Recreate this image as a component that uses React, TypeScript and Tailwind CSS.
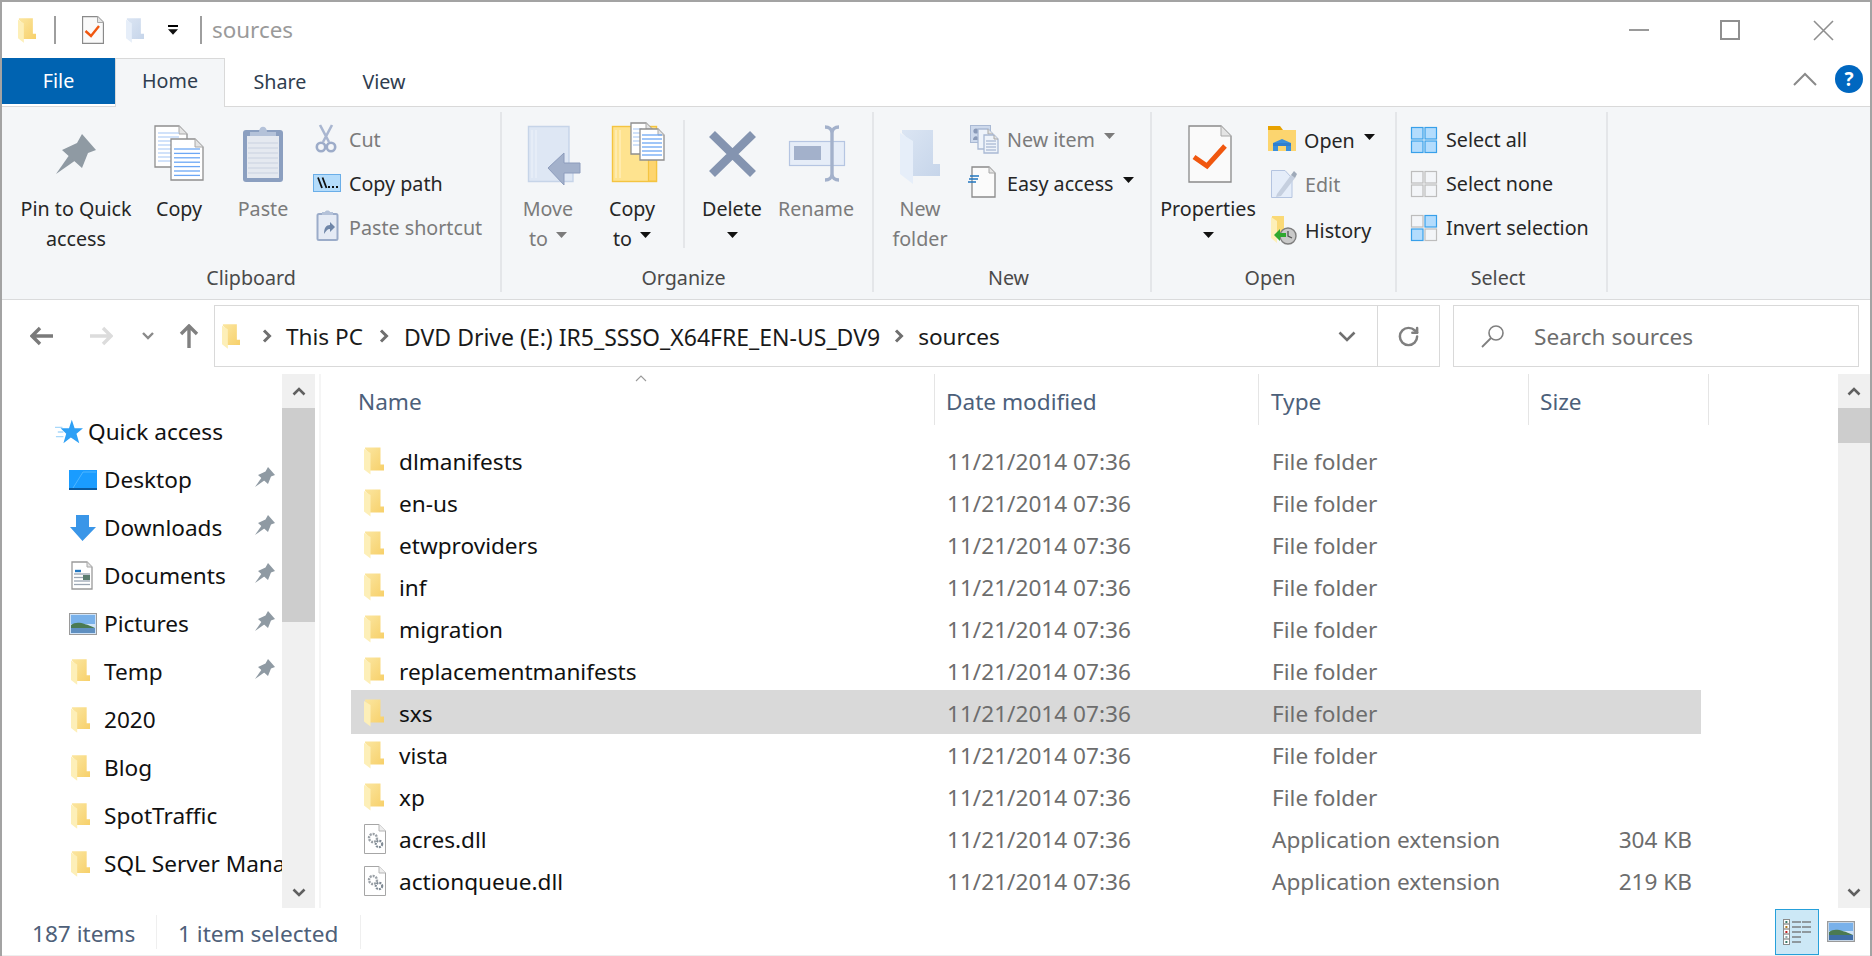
import React from "react";
import { RotateCw } from "lucide-react";

const BLUE_LINE = "#6ca7f5";

function Grad({ id, a, b }: { id: string; a: string; b: string }) {
  return (
    <defs>
      <linearGradient id={id} x1="0" y1="0" x2="1" y2="1">
        <stop offset="0" stopColor={a} />
        <stop offset="1" stopColor={b} />
      </linearGradient>
    </defs>
  );
}

function Folder({ pale = false, w = 20, h = 28, className = "" }: { pale?: boolean; w?: number; h?: number; className?: string }) {
  const id = pale ? "fp" : "fy";
  return (
    <svg width={w} height={h} viewBox="0 0 20 28" className={"shrink-0 overflow-visible " + className}>
      <Grad id={id} a={pale ? "#dbe5f3" : "#fbe6a0"} b={pale ? "#c6d5ea" : "#f7d06a"} />
      <path d="M1 0.5H16.5V17.5H20V23.5H5V6L1 2Z" fill={`url(#${id})`} />
      <path d="M0 2L6.5 6V27.5L0 22.5Z" fill={pale ? "#e6eef9" : "#fdefb8"} />
    </svg>
  );
}

function Lines({ x1, x2, y, n, step, color }: { x1: number; x2: number; y: number; n: number; step: number; color: string }) {
  return (
    <>
      {Array.from({ length: n }).map((_, i) => (
        <line key={i} x1={x1} x2={x2} y1={y + i * step} y2={y + i * step} stroke={color} strokeWidth="1.3" />
      ))}
    </>
  );
}

function Page({ x, y, w, h, f = 8, fill = "#fff", stroke = "#8f8f8f" }: { x: number; y: number; w: number; h: number; f?: number; fill?: string; stroke?: string }) {
  return (
    <>
      <path d={`M${x} ${y}H${x + w - f}L${x + w} ${y + f}V${y + h}H${x}Z`} fill={fill} stroke={stroke} strokeWidth="1.3" />
      <path d={`M${x + w - f} ${y}V${y + f}H${x + w}`} fill="#e4e4e4" stroke="#a8a8a8" strokeWidth="1" />
    </>
  );
}

const BigBox = ({ children }: { children: React.ReactNode }) => (
  <svg width="60" height="66" viewBox="0 0 60 66" className="overflow-visible">
    {children}
  </svg>
);

const PinShape = ({ fill = "#8f9aa3" }: { fill?: string }) => (
  <>
    <path d="M10 54L24 34L30 40Z" fill={fill} />
    <path d="M36 14L50 30L42 33L36 48L16 30L31 23Z" fill={fill} />
  </>
);

const PinIcon = () => (
  <BigBox>
    <PinShape />
  </BigBox>
);

const CopyIcon = () => (
  <BigBox>
    <Page x={6} y={6} w={32} h={41} fill="#fff" />
    <Lines x1={9} x2={30} y={13} n={8} step={4} color="#b9d2f7" />
    <Page x={22} y={19} w={32} h={41} />
    <Lines x1={25} x2={51} y={29} n={7} step={4.4} color={BLUE_LINE} />
  </BigBox>
);

const PasteIcon = () => (
  <BigBox>
    <rect x="10" y="10" width="40" height="52" rx="3" fill="#8b9fc0" />
    <rect x="14" y="16" width="32" height="42" fill="#e5e9f0" />
    <Lines x1={15} x2={45} y={23} n={7} step={5} color="#d0d7e4" />
    <path d="M17 16V12H26C26 5 34 5 34 12H43V16Z" fill="#b4c2d9" />
  </BigBox>
);

const MoveIcon = () => (
  <BigBox>
    <path d="M10.5 6.5H51V51H55V61.5H10.5Z" fill="#dee7f4" stroke="#c6d4e8" strokeWidth="1.4" />
    <line x1="14" x2="14" y1="10" y2="58" stroke="#e9eff8" strokeWidth="1.5" />
    <line x1="18" x2="18" y1="10" y2="58" stroke="#e9eff8" strokeWidth="1.5" />
    <path d="M30 48L46 33V43H62V53H46V65Z" fill="#a3b1cb" stroke="#8d9cbc" strokeWidth="1" />
  </BigBox>
);

const CopyToIcon = () => (
  <BigBox>
    <rect x="10.5" y="6.5" width="44" height="55" fill="#fee38f" stroke="#f4c441" strokeWidth="1.4" />
    <line x1="14" x2="14" y1="10" y2="58" stroke="#ffeeb8" strokeWidth="1.5" />
    <line x1="18" x2="18" y1="10" y2="58" stroke="#ffeeb8" strokeWidth="1.5" />
    <path d="M46.5 61V40L50 36L54.5 40V61Z" fill="#fed56f" stroke="#f4c441" strokeWidth="1.2" />
    <Page x={29} y={3} w={21} h={31} f={6} />
    <Lines x1={31} x2={40} y={9} n={5} step={4} color="#b9d2f7" />
    <Page x={38} y={9} w={24} h={31} f={6} />
    <Lines x1={40} x2={60} y={15} n={6} step={4} color={BLUE_LINE} />
  </BigBox>
);

const DeleteIcon = () => (
  <BigBox>
    <path d="M10 14L51 54M51 14L10 54" stroke="#8494b0" strokeWidth="8.5" />
  </BigBox>
);

const RenameIcon = () => (
  <BigBox>
    <rect x="3.5" y="21.5" width="55" height="24" fill="#e6edf8" stroke="#b5c5e2" strokeWidth="1.2" />
    <rect x="8" y="26" width="27" height="14" fill="#a3b1cb" />
    <path d="M46 12V55M39 7C43 7 46 9 46 13C46 9 49 7 53 7M39 60C43 60 46 58 46 54C46 58 49 60 53 60" fill="none" stroke="#a3b1cb" strokeWidth="3.4" />
  </BigBox>
);

const NewFolderIcon = () => (
  <div className="h-[66px] pt-[9px]">
    <Folder pale w={40} h={56} />
  </div>
);

const PropertiesIcon = () => (
  <BigBox>
    <Page x={11} y={6} w={42} h={56} f={10} fill="#fafafa" stroke="#8a8a8a" />
    <path d="M16 37L29 46L47 26" fill="none" stroke="#f0570f" strokeWidth="5" />
  </BigBox>
);

const Small = ({ children, w = 28 }: { children: React.ReactNode; w?: number }) => (
  <svg width={w} height="30" viewBox={`0 0 ${w} 30`} className="shrink-0 overflow-visible">
    {children}
  </svg>
);

const CutIcon = () => (
  <Small>
    <path d="M7 0L16 17M19 0L10 17" stroke="#a9b6d0" strokeWidth="2.6" />
    <circle cx="8" cy="22" r="4.2" fill="none" stroke="#9dacc9" strokeWidth="2.6" />
    <circle cx="18" cy="22" r="4.2" fill="none" stroke="#9dacc9" strokeWidth="2.6" />
  </Small>
);

const CopyPathIcon = () => (
  <Small>
    <rect x="0.5" y="5.5" width="27" height="17" fill="#b4dcfb" stroke="#6aaee8" />
    <path d="M5 8.5L9 19M9.5 8.5L13.5 19" stroke="#111" strokeWidth="1.8" />
    <path d="M15 18H17M19 18H21M23 18H25" stroke="#111" strokeWidth="1.8" />
  </Small>
);

const PasteShortcutIcon = () => (
  <Small>
    <rect x="4.5" y="1" width="20" height="26" rx="1.5" fill="#e5ebf5" stroke="#9bacc9" strokeWidth="2" />
    <path d="M9 2V-1H12C12 -3 17 -3 17 -1H20V2Z" fill="#b4c2d9" />
    <path d="M11 21C11 15 13 12 17 12V9L22 14L17 19V16C14 16 13 18 11 21Z" fill="#6f86a8" />
  </Small>
);

const NewItemIcon = () => (
  <Small>
    <rect x="0.5" y="0.5" width="20" height="17" fill="#cdd9ec" stroke="#a9b9d4" />
    <circle cx="6" cy="6" r="2.6" fill="#8a9ab8" />
    <path d="M3 15C3 10 9 10 9 15Z" fill="#8a9ab8" />
    <Page x={8} y={4} w={15} h={20} f={5} fill="#eef3fa" stroke="#a9b9d4" />
    <Page x={14} y={10} w={14} h={18} f={4} fill="#eef3fa" stroke="#a9b9d4" />
    <Lines x1={16} x2={26} y={16} n={4} step={3} color="#a9b9d4" />
  </Small>
);

const EasyIcon = () => (
  <Small>
    <Page x={2} y={-2} w={23} h={30} f={6} fill="#fbfbfb" stroke="#8a8a8a" />
    <path d="M0 7H9M-1 10H8M-2 13H6" stroke="#2277c0" strokeWidth="1.6" />
  </Small>
);

const OpenIcon = () => (
  <Small>
    <path d="M0 0H12L15 4H0Z" fill="#e8a200" />
    <rect x="0" y="4" width="28" height="21" fill="#fcd56f" />
    <path d="M5 25V17L14 13L23 17V25H18V19H10V25Z" fill="#3a8fdc" />
    <rect x="5" y="17" width="18" height="3" fill="#2f7fcf" />
  </Small>
);

const EditIcon = () => (
  <Small>
    <path d="M3.5 0.5H17L24 8V27.5H3.5Z" fill="#e5edf9" stroke="#b4c4e0" />
    <path d="M9 24L23 5L27 8L13 26L8 27Z" fill="#c5cfdf" />
    <path d="M23 5L26 1L29 4L27 8Z" fill="#9faab9" />
  </Small>
);

const HistoryIcon = () => (
  <Small>
    <path d="M4 0H16V20H4Z" fill="#fad976" />
    <path d="M3 1L9 5V27L3 22Z" fill="#fdefb8" />
    <circle cx="20" cy="20" r="8" fill="#c9c9c9" stroke="#7d7d7d" strokeWidth="1.4" />
    <path d="M20 15V20L24 22" stroke="#555" strokeWidth="1.3" fill="none" />
    <path d="M6 19L12 13V17H18V21H12V25Z" fill="#2fa82f" />
  </Small>
);

const Squares = ({ pattern }: { pattern: boolean[] }) => (
  <svg width="26" height="26" viewBox="0 0 26 26" className="shrink-0 overflow-visible">
    {[0, 1, 2, 3].map((i) => {
      const x = i % 2 === 0 ? 0.5 : 14;
      const y = i < 2 ? 0.5 : 14;
      const on = pattern[i];
      return <rect key={i} x={x} y={y} width="11.5" height="11.5" fill={on ? "#b3dcfd" : "#f3f5f8"} stroke={on ? "#38a0ea" : "#bdbdbd"} strokeWidth="1.2" />;
    })}
  </svg>
);

const Caret = ({ color = "#111", className = "" }: { color?: string; className?: string }) => (
  <svg width="11" height="6" viewBox="0 0 11 6" className={"shrink-0 " + className}>
    <path d="M0 0H11L5.5 6Z" fill={color} />
  </svg>
);

function BigBtn({ w, ml, icon, l1, l2, caret, off }: { w: number; ml: string; icon: React.ReactNode; l1: string; l2?: string; caret?: boolean; off?: boolean }) {
  const txt = off ? "text-[#7b7b7b]" : "text-[#262626]";
  return (
    <div className={"flex flex-col items-center shrink-0 " + ml + " " + txt} style={{ width: w }}>
      <div className="h-[74px] flex justify-center">{icon}</div>
      <div className="h-[30px] leading-[30px] whitespace-nowrap">{l1}</div>
      <div className="h-[30px] leading-[30px] whitespace-nowrap flex items-center gap-[8px]">
        {l2 && <span>{l2}</span>}
        {caret && <Caret color={off ? "#7b7b7b" : "#111"} className="-mt-[8px]" />}
      </div>
    </div>
  );
}

function SmallBtn({ icon, text, off, caret, h = "h-[44px]", tw = "w-[36px]", caretOff }: { icon: React.ReactNode; text: string; off?: boolean; caret?: boolean; h?: string; tw?: string; caretOff?: boolean }) {
  return (
    <div className={"flex items-center " + h + " " + (off ? "text-[#7b7b7b]" : "text-[#262626]")}>
      <div className={"flex shrink-0 " + tw}>{icon}</div>
      <span className="whitespace-nowrap">{text}</span>
      {caret && <Caret color={caretOff ? "#7b7b7b" : "#111"} className="ml-[9px] -mt-[8px]" />}
    </div>
  );
}

function Group({ w, label, lp = "", children }: { w: string; label: string; lp?: string; children: React.ReactNode }) {
  return (
    <div className={"flex flex-col shrink-0 h-[180px] border-r-2 border-[#e4e6e9] " + w}>
      <div className="flex h-[144px] pt-[8px]">{children}</div>
      <div className={"h-[28px] leading-[28px] text-center text-[#4a4a4a] mt-[9px] " + lp}>{label}</div>
    </div>
  );
}

const rows: { name: string; type: string; size?: string; dll?: boolean; sel?: boolean }[] = [
  { name: "dlmanifests", type: "File folder" },
  { name: "en-us", type: "File folder" },
  { name: "etwproviders", type: "File folder" },
  { name: "inf", type: "File folder" },
  { name: "migration", type: "File folder" },
  { name: "replacementmanifests", type: "File folder" },
  { name: "sxs", type: "File folder", sel: true },
  { name: "vista", type: "File folder" },
  { name: "xp", type: "File folder" },
  { name: "acres.dll", type: "Application extension", size: "304 KB", dll: true },
  { name: "actionqueue.dll", type: "Application extension", size: "219 KB", dll: true },
];

const DllIcon = () => (
  <svg width="22" height="30" viewBox="0 0 22 30" className="shrink-0 overflow-visible">
    <path d="M0.5 0.5H15L21.5 7V29.5H0.5Z" fill="#fff" stroke="#a6a6a6" />
    <path d="M15 0.5V7H21.5" fill="#eee" stroke="#b5b5b5" />
    <circle cx="9" cy="14" r="4" fill="none" stroke="#9aa0a6" strokeWidth="2.4" strokeDasharray="2 1" />
    <circle cx="15" cy="20" r="3.2" fill="none" stroke="#7f8a94" strokeWidth="2.2" strokeDasharray="2 1" />
  </svg>
);

const NavPin = () => (
  <svg width="20" height="20" viewBox="10 14 40 40" className="shrink-0">
    <PinShape />
  </svg>
);

function NavRow({ icon, text, pin }: { icon: React.ReactNode; text: string; pin?: boolean }) {
  return (
    <div className="flex items-center h-[48px] pl-[67px] relative">
      <div className="w-[35px] flex shrink-0">{icon}</div>
      <span className="whitespace-nowrap text-[#111]">{text}</span>
      {pin && (
        <div className="absolute left-[253px] top-[11px]">
          <NavPin />
        </div>
      )}
    </div>
  );
}

const Chev = ({ up }: { up?: boolean }) => (
  <svg width="14" height="9" viewBox="0 0 14 9">
    <path d={up ? "M1.5 7.5L7 2L12.5 7.5" : "M1.5 1.5L7 7L12.5 1.5"} fill="none" stroke="#606060" strokeWidth="2.6" />
  </svg>
);

const Crumb = () => (
  <svg width="10" height="14" viewBox="0 0 10 14" className="shrink-0">
    <path d="M2 1.5L7.5 7L2 12.5" fill="none" stroke="#6f6f6f" strokeWidth="3" />
  </svg>
);

function Scrollbar({ thumb, h }: { thumb: string; h?: string }) {
  return (
    <div className={"flex flex-col shrink-0 bg-[#f0f0f0] h-full " + (h ?? "w-[32px]")}>
      <div className="h-[34px] flex items-center justify-center shrink-0">
        <Chev up />
      </div>
      <div className={"bg-[#cdcdcd] shrink-0 " + thumb} />
      <div className="flex-1" />
      <div className="h-[34px] flex items-center justify-center shrink-0 pt-[2px]">
        <Chev />
      </div>
    </div>
  );
}

export default function App() {
  return (
    <div className="relative w-[1872px] h-[956px] overflow-hidden bg-white border-2 border-b-0 border-[#a3a3a3] flex flex-col font-['Noto_Sans',sans-serif] text-[19.7px] box-border">
      <div className="absolute -left-[2px] top-[139px] w-[2px] h-[80px] bg-[#1a6fb5]" />

      {/* title bar */}
      <div className="h-[56px] flex items-center shrink-0">
        <Folder w={18} h={27} className="ml-[16px]" />
        <div className="w-[2px] h-[28px] bg-[#9e9e9e] ml-[18px]" />
        <svg width="22" height="28" viewBox="0 0 22 28" className="ml-[26px]">
          <Page x={0.5} y={0.5} w={21} h={27} f={6} fill="#fafafa" stroke="#8a8a8a" />
          <path d="M3.5 15L9 20L17 10" fill="none" stroke="#f0570f" strokeWidth="2.4" />
        </svg>
        <Folder pale w={18} h={27} className="ml-[22px]" />
        <div className="ml-[24px] flex flex-col items-center gap-[2px] w-[10px]">
          <div className="w-[10px] h-[1.5px] bg-black" />
          <Caret className="w-[10px]" />
        </div>
        <div className="w-[2px] h-[28px] bg-[#9e9e9e] ml-[22px]" />
        <span className="ml-[10px] text-[#9a9a9a] text-[22.4px]">sources</span>
        <div className="ml-auto flex items-center">
          <div className="w-[20px] h-[2px] bg-[#9a9a9a]" />
          <div className="w-[20px] h-[20px] border-2 border-[#8f8f8f] ml-[71px]" />
          <svg width="21" height="21" viewBox="0 0 21 21" className="ml-[73px] mr-[36px]">
            <path d="M1 1L20 20M20 1L1 20" stroke="#8f8f8f" strokeWidth="1.6" />
          </svg>
        </div>
      </div>

      {/* tabs */}
      <div className="h-[49px] flex shrink-0 border-b border-[#d9d9d9] text-[#2f3d4f]">
        <div className="w-[113px] h-[46px] bg-[#0063b1] text-white flex items-center justify-center">File</div>
        <div className="w-[110px] h-[49px] bg-[#f4f6f8] border border-b-0 border-[#d9d9d9] flex items-center justify-center pb-[4px]">Home</div>
        <div className="w-[110px] flex items-center justify-center">Share</div>
        <div className="w-[98px] flex items-center justify-center">View</div>
        <div className="ml-auto flex items-center pb-[6px]">
          <svg width="24" height="14" viewBox="0 0 24 14">
            <path d="M1 13L12 2L23 13" fill="none" stroke="#8a8a8a" strokeWidth="2" />
          </svg>
          <div className="w-[28px] h-[28px] rounded-full bg-[#0067c0] text-white flex items-center justify-center ml-[18px] mr-[7px] font-bold text-[19px]">?</div>
        </div>
      </div>

      {/* ribbon */}
      <div className="h-[193px] bg-[#f4f6f8] border-b border-[#dadbdc] flex pt-[5px] shrink-0">
        <Group w="w-[500px]" label="Clipboard">
          <BigBtn w={120} ml="ml-[14px]" icon={<PinIcon />} l1="Pin to Quick" l2="access" />
          <BigBtn w={70} ml="ml-[8px]" icon={<CopyIcon />} l1="Copy" />
          <BigBtn w={70} ml="ml-[14px]" icon={<PasteIcon />} l1="Paste" off />
          <div className="ml-[15px] -mt-[2px] flex flex-col">
            <SmallBtn icon={<CutIcon />} text="Cut" off />
            <SmallBtn icon={<CopyPathIcon />} text="Copy path" />
            <SmallBtn icon={<PasteShortcutIcon />} text="Paste shortcut" off />
          </div>
        </Group>
        <Group w="w-[372px]" label="Organize" lp="pr-[7px]">
          <BigBtn w={70} ml="ml-[11px]" icon={<MoveIcon />} l1="Move" l2="to" caret off />
          <BigBtn w={70} ml="ml-[14px]" icon={<CopyToIcon />} l1="Copy" l2="to" caret />
          <div className="w-[2px] h-[128px] bg-[#e4e6e9] ml-[16px] shrink-0" />
          <BigBtn w={70} ml="ml-[12px]" icon={<DeleteIcon />} l1="Delete" caret />
          <BigBtn w={70} ml="ml-[14px]" icon={<RenameIcon />} l1="Rename" off />
        </Group>
        <Group w="w-[278px]" label="New" lp="pr-[7px]">
          <BigBtn w={70} ml="ml-[11px]" icon={<NewFolderIcon />} l1="New" l2="folder" off />
          <div className="ml-[15px] -mt-[2px] flex flex-col">
            <SmallBtn icon={<NewItemIcon />} text="New item" off caret caretOff tw="w-[37px]" />
            <SmallBtn icon={<EasyIcon />} text="Easy access" caret tw="w-[37px]" />
          </div>
        </Group>
        <Group w="w-[245px]" label="Open" lp="pr-[7px]">
          <BigBtn w={104} ml="ml-[4px]" icon={<PropertiesIcon />} l1="Properties" caret />
          <div className="ml-[8px] -mt-[1px] flex flex-col">
            <SmallBtn icon={<OpenIcon />} text="Open" caret />
            <SmallBtn icon={<EditIcon />} text="Edit" off tw="w-[37px]" />
            <SmallBtn icon={<HistoryIcon />} text="History" h="h-[48px]" tw="w-[37px]" />
          </div>
        </Group>
        <Group w="w-[211px]" label="Select" lp="pr-[7px]">
          <div className="ml-[14px] -mt-[2px] flex flex-col">
            <SmallBtn icon={<Squares pattern={[true, true, true, true]} />} text="Select all" tw="w-[35px]" />
            <SmallBtn icon={<Squares pattern={[false, false, false, false]} />} text="Select none" tw="w-[35px]" />
            <SmallBtn icon={<Squares pattern={[false, true, true, false]} />} text="Invert selection" tw="w-[35px]" />
          </div>
        </Group>
      </div>

      {/* address */}
      <div className="h-[74px] pt-[5px] flex shrink-0 text-[22.6px]">
        <div className="w-[212px] h-[62px] flex items-center shrink-0">
          <svg width="24" height="20" viewBox="0 0 24 20" className="ml-[28px]">
            <path d="M10 2L2 10L10 18M2 10H23" fill="none" stroke="#7a7a7a" strokeWidth="3.4" />
          </svg>
          <svg width="24" height="20" viewBox="0 0 24 20" className="ml-[35px]">
            <path d="M14 2L22 10L14 18M22 10H1" fill="none" stroke="#dcdcdc" strokeWidth="3.4" />
          </svg>
          <svg width="12" height="8" viewBox="0 0 12 8" className="ml-[29px]">
            <path d="M1 1L6 6L11 1" fill="none" stroke="#8a8a8a" strokeWidth="2.4" />
          </svg>
          <svg width="20" height="24" viewBox="0 0 20 24" className="ml-[25px]">
            <path d="M2 10L10 2L18 10M10 2V24" fill="none" stroke="#808080" strokeWidth="3.4" />
          </svg>
        </div>
        <div className="w-[1226px] h-[62px] border border-[#d9d9d9] flex items-center shrink-0 text-[#1a1a1a]">
          <Folder w={18} h={27} className="ml-[7px]" />
          <div className="w-[22px]" />
          <Crumb />
          <span className="ml-[14px] whitespace-nowrap pt-[2px]">This PC</span>
          <div className="ml-[16px]">
            <Crumb />
          </div>
          <span className="ml-[15px] whitespace-nowrap text-[23px] pt-[2px]">DVD Drive (E:) IR5_SSSO_X64FRE_EN-US_DV9</span>
          <div className="ml-[14px]">
            <Crumb />
          </div>
          <span className="ml-[14px] whitespace-nowrap pt-[2px]">sources</span>
          <div className="flex-1" />
          <svg width="18" height="11" viewBox="0 0 18 11" className="mr-[21px]">
            <path d="M1.5 1.5L9 9L16.5 1.5" fill="none" stroke="#707070" strokeWidth="2.6" />
          </svg>
          <div className="w-[62px] h-full border-l border-[#d9d9d9] flex items-center justify-center">
            <RotateCw size={23} strokeWidth={2.6} color="#7f7f7f" />
          </div>
        </div>
        <div className="w-[406px] h-[62px] border border-[#d9d9d9] ml-[13px] flex items-center shrink-0">
          <svg width="26" height="24" viewBox="0 0 26 24" className="ml-[26px]">
            <circle cx="16" cy="9" r="7" fill="none" stroke="#7f7f7f" strokeWidth="1.6" />
            <path d="M11 14L2 23" stroke="#7f7f7f" strokeWidth="1.8" />
          </svg>
          <span className="ml-[28px] text-[#6d6d6d] whitespace-nowrap pt-[2px]">Search sources</span>
        </div>
      </div>

      {/* body */}
      <div className="h-[534px] flex shrink-0 text-[22.6px]">
        <div className="w-[280px] overflow-hidden pt-[34px] shrink-0">
          <div className="flex items-center h-[48px] pl-[53px]">
            <svg width="28" height="26" viewBox="0 0 30 26" className="shrink-0">
              <path d="M18 0L21 9H30L23 15L26 25L17 19L9 25L12 15L6 9H15Z" fill="#2ea0f5" />
              <path d="M0 8H8M3 13H9M1 18H9" stroke="#a8d8fa" strokeWidth="1.4" />
            </svg>
            <span className="ml-[5px] text-[#111] whitespace-nowrap">Quick access</span>
          </div>
          <NavRow
            text="Desktop"
            pin
            icon={
              <svg width="28" height="20" viewBox="0 0 28 20">
                <rect width="28" height="20" fill="#1a9cff" />
                <path d="M4 18L14 2H27" fill="none" stroke="#4db5ff" strokeWidth="1" />
                <rect y="18" width="28" height="2" fill="#0a5aa0" />
              </svg>
            }
          />
          <NavRow
            text="Downloads"
            pin
            icon={
              <svg width="28" height="28" viewBox="0 0 28 28">
                <path d="M7 1H20V13H27L13.5 27L1 13H7Z" fill="#3a96e8" />
              </svg>
            }
          />
          <NavRow
            text="Documents"
            pin
            icon={
              <svg width="28" height="30" viewBox="0 0 28 30">
                <Page x={3} y={1} w={20} h={27} f={5} fill="#fff" stroke="#9a9a9a" />
                <path d="M6 10H12" stroke="#2277c0" strokeWidth="2.4" />
                <Lines x1={5} x2={21} y={13} n={4} step={3.5} color="#9aa5b2" />
                <rect x="14" y="14" width="7" height="5" fill="#5a7d70" />
              </svg>
            }
          />
          <NavRow
            text="Pictures"
            pin
            icon={
              <svg width="28" height="22" viewBox="0 0 28 22">
                <rect x="0.5" y="0.5" width="27" height="21" fill="#cfe3f8" stroke="#9a9a9a" />
                <rect x="2" y="2" width="24" height="9" fill="#79b1ea" />
                <path d="M2 12C8 8 14 10 26 15V15H2Z" fill="#4b7a52" />
                <rect x="2" y="15" width="24" height="5" fill="#5f8fc0" />
              </svg>
            }
          />
          <NavRow text="Temp" pin icon={<Folder w={19} h={28} className="ml-[2px]" />} />
          <NavRow text="2020" icon={<Folder w={19} h={28} className="ml-[2px]" />} />
          <NavRow text="Blog" icon={<Folder w={19} h={28} className="ml-[2px]" />} />
          <NavRow text="SpotTraffic" icon={<Folder w={19} h={28} className="ml-[2px]" />} />
          <NavRow text="SQL Server Management" icon={<Folder w={19} h={28} className="ml-[2px]" />} />
        </div>
        <Scrollbar thumb="h-[214px]" h="w-[33px]" />
        <div className="w-[4px] shrink-0" />
        <div className="w-[2px] shrink-0 bg-[#f5f5f5]" />

        {/* list */}
        <div className="flex-1 overflow-hidden flex flex-col min-w-0 relative">
          <div className="absolute left-[314px] top-[1px]">
            <svg width="12" height="7" viewBox="0 0 12 7">
              <path d="M1 6L6 1L11 6" fill="none" stroke="#9a9a9a" strokeWidth="1.1" />
            </svg>
          </div>
          <div className="h-[51px] flex shrink-0 text-[#4c607a]">
            <div className="w-[614px] pl-[37px] pt-[11px] border-r border-[#e5e5e5]">Name</div>
            <div className="w-[324px] pl-[11px] pt-[11px] border-r border-[#e5e5e5]">Date modified</div>
            <div className="w-[270px] pl-[12px] pt-[11px] border-r border-[#e5e5e5]">Type</div>
            <div className="w-[180px] pl-[11px] pt-[11px] border-r border-[#e5e5e5]">Size</div>
          </div>
          <div className="pt-[15px] pl-[30px] flex-1 overflow-hidden">
            {rows.map((r) => (
              <div key={r.name} className={"w-[1350px] flex items-center " + (r.sel ? "h-[44px] -mt-[2px] bg-[#d9d9d9] pt-[2px]" : "h-[42px]")}>
                <div className="w-[48px] pl-[13px] flex shrink-0">{r.dll ? <DllIcon /> : <Folder w={20} h={28} />}</div>
                <span className="w-[548px] shrink-0 text-[#111] whitespace-nowrap pt-[2px]">{r.name}</span>
                <span className="w-[325px] shrink-0 text-[#6d6d6d] whitespace-nowrap pt-[2px]">11/21/2014 07:36</span>
                <span className="w-[288px] shrink-0 text-[#6d6d6d] whitespace-nowrap pt-[2px]">{r.type}</span>
                <span className="w-[132px] shrink-0 text-[#6d6d6d] text-right whitespace-nowrap pt-[2px]">{r.size}</span>
              </div>
            ))}
            <div className="pl-[13px] pt-[12px]">
              <DllIcon />
            </div>
          </div>
        </div>
        <Scrollbar thumb="h-[35px]" />
      </div>

      {/* status */}
      <div className="h-[48px] flex items-center shrink-0 text-[#4e6079] border-b border-[#eeeeee] text-[22.6px]">
        <span className="ml-[30px] w-[124px] whitespace-nowrap pt-[4px]">187 items</span>
        <div className="w-[1px] h-[34px] bg-[#efefef]" />
        <span className="ml-[21px] w-[182px] whitespace-nowrap pt-[4px]">1 item selected</span>
        <div className="w-[1px] h-[34px] bg-[#efefef]" />
        <div className="ml-auto flex items-center">
          <div className="w-[44px] h-[46px] bg-[#cce8f6] border border-[#26a0da] flex items-center justify-center">
            <svg width="28" height="26" viewBox="0 0 28 26">
              <rect x="0.5" y="0.5" width="6" height="25" fill="#fff" stroke="#8a8a8a" />
              <Lines x1={1} x2={6} y={5} n={4} step={5} color="#8a8a8a" />
              <rect x="2.4" y="2" width="2" height="2" fill="#3a7a6a" />
              <rect x="2.4" y="7" width="2" height="2" fill="#b07a20" />
              <rect x="2.4" y="12" width="2" height="2" fill="#c02020" />
              <rect x="2.4" y="17" width="2" height="2" fill="#8aa" />
              <rect x="2.4" y="22" width="2" height="2" fill="#3a7a6a" />
              <Lines x1={9} x2={18} y={3} n={5} step={5} color="#6f6f6f" />
              <Lines x1={19} x2={28} y={3} n={3} step={5} color="#6f6f6f" />
            </svg>
          </div>
          <svg width="28" height="21" viewBox="0 0 28 21" className="ml-[8px] mr-[15px]">
            <rect x="0.5" y="0.5" width="27" height="20" fill="#cfe3f8" stroke="#9a9a9a" strokeWidth="1.4" />
            <rect x="2" y="2" width="24" height="8" fill="#79b1ea" />
            <path d="M2 11C8 7 14 9 26 14H2Z" fill="#4b7a52" />
            <rect x="2" y="14" width="24" height="5" fill="#3f6ea8" />
          </svg>
        </div>
      </div>
    </div>
  );
}
